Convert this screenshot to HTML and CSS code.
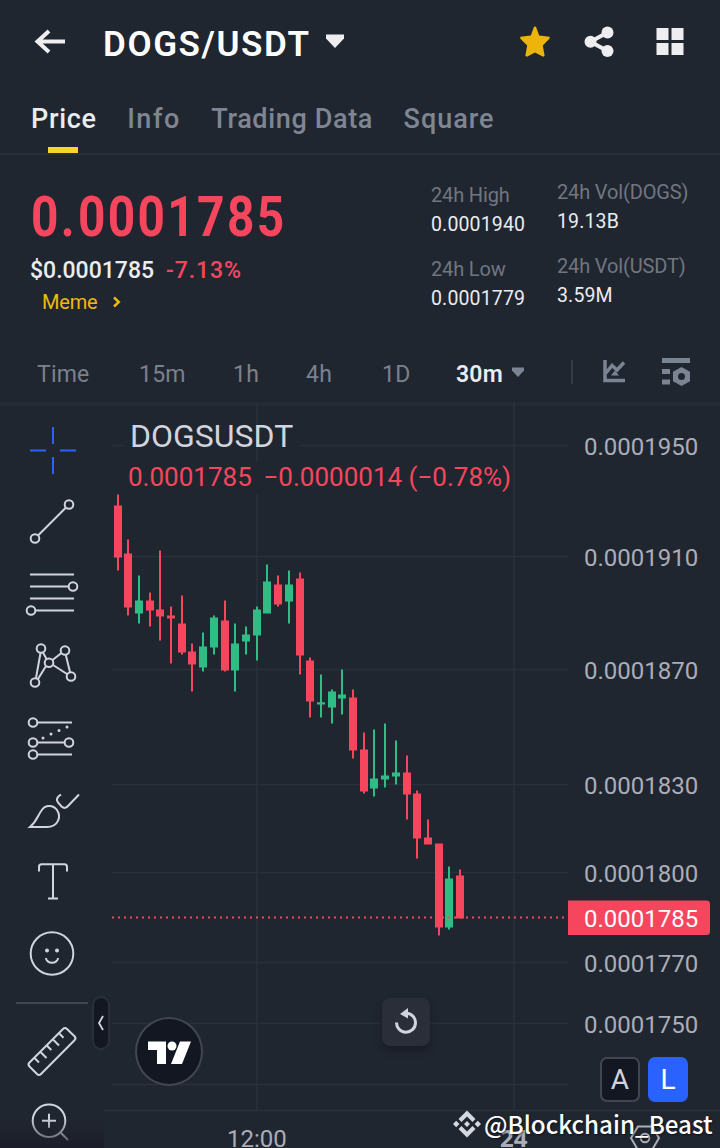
FILE: index.html
```
<!DOCTYPE html>
<html lang="en">
<head>
  <meta charset="UTF-8" />
  <title>DOGS/USDT</title>
  <link rel="stylesheet" href="styles.css">
</head>
<body>
  <header class="header">
    <svg class="back" width="36" height="36" viewBox="0 0 36 36"><path d="M33 17.500H6M17 7L5.500 17.500L17 28"/></svg>
    <h1>DOGS/USDT</h1>
    <svg class="caret" width="20" height="16" viewBox="0 0 20 16"><path d="M1 .500h18v4l-9 9.500L1 4.500z"/></svg>
    <div class="header-icons">
      <svg class="star" width="32" height="32" viewBox="0 0 32 32"><path d="M17 .8L20.200 9.600L30.500 10.800Q31 12 30.400 12.800L23.800 19.600L25.600 29.500Q24.800 31 23.600 30.500L16 26.500L8.400 30.500Q7 31 6.400 29.500L8.200 19.600L1.400 12.800Q.9 12 1.500 10.800L11.800 9.600L15 .8Q16 0 17 .8Z"/></svg>
      <svg class="share" width="32" height="32" viewBox="0 0 32 32"><path d="M24.500 6.500L7.500 15.700L24.500 25"/><circle cx="24.500" cy="6.500" r="6"/><circle cx="7.500" cy="15.700" r="6"/><circle cx="24.500" cy="25" r="6"/></svg>
      <svg class="apps" width="32" height="32" viewBox="0 0 32 32"><path d="M2.500 2h12v12h-12zM17.500 2h12v12h-12zM2.500 17h12v12h-12zM17.500 17h12v12h-12z"/></svg>
    </div>
  </header>

  <nav class="tabs">
    <a class="tab active">Price</a>
    <a class="tab">Info</a>
    <a class="tab">Trading Data</a>
    <a class="tab">Square</a>
  </nav>

  <section class="summary">
    <div class="price-box">
      <div class="price">0<span class="dot">.</span>0001785</div>
      <div class="sub"><span class="usd">$0.0001785</span><span class="change">-7.13%</span></div>
      <div class="tag">Meme <svg width="10" height="14" viewBox="0 0 10 14"><path d="M2 2.500L6.800 7L2 11.500"/></svg></div>
    </div>
    <div class="stats stats-price">
      <div class="stat"><div class="label">24h High</div><div class="value">0.0001940</div></div>
      <div class="stat"><div class="label">24h Low</div><div class="value">0.0001779</div></div>
    </div>
    <div class="stats">
      <div class="stat"><div class="label">24h Vol(DOGS)</div><div class="value">19.13B</div></div>
      <div class="stat"><div class="label">24h Vol(USDT)</div><div class="value">3.59M</div></div>
    </div>
  </section>

  <div class="intervals">
    <span>Time</span>
    <span>15m</span>
    <span>1h</span>
    <span>4h</span>
    <span>1D</span>
    <span class="selected">30m <svg width="14" height="11" viewBox="0 0 14 11"><path d="M1 .500h12v3L7 10L1 3.500z"/></svg></span>
    <i class="divider"></i>
    <svg class="indicator" width="26" height="26" viewBox="0 0 26 26"><path d="M4 2v20.500h20M5 15L11 7.500L16 12L23 4.500"/><path class="fill" d="M10 17.500l4-5l4 5z"/></svg>
    <svg class="settings" width="30" height="30" viewBox="0 0 30 30"><path d="M1 2h28v5H1zM1 13h8v5H1zM1 23.500h8v5H1z"/><path fill-rule="evenodd" d="M20.500 11L29 15.800v9.400L20.500 30L12 25.200v-9.400zM20.500 17a3.500 3.500 0 1 0 0 7a3.500 3.500 0 1 0 0-7z"/></svg>
  </div>

  <main class="chart">
    <div class="tools">
      <svg class="tool cross" viewBox="0 0 104 72"><path d="M53 13v17M53 43v17M30 36.500h16M60 36.500h16"/></svg>
      <svg class="tool" viewBox="0 0 104 72"><circle cx="69" cy="18.500" r="4.300"/><circle cx="35" cy="52.500" r="4.300"/><path d="M38 49.500L66 21.500"/></svg>
      <svg class="tool" viewBox="0 0 104 72"><path d="M30 16.500h44M30 28.500h38.500M30 40.500h44M35.500 52.500H74"/><circle cx="73" cy="28.500" r="4.300"/><circle cx="31" cy="52.500" r="4.300"/></svg>
      <svg class="tool" viewBox="0 0 104 72"><circle cx="41" cy="18.500" r="4.300"/><circle cx="65" cy="20.500" r="4.300"/><circle cx="49" cy="32.700" r="4.300"/><circle cx="71" cy="46.500" r="4.300"/><circle cx="35" cy="52.500" r="4.300"/><path d="M40.500 23L36 48M43 22.500L46.500 29M46 36L38 49M52.500 30L61.500 23M53 35L67 44M65.800 25L70 42"/></svg>
      <svg class="tool" viewBox="0 0 104 72"><circle cx="33" cy="20.500" r="4.300"/><circle cx="33" cy="40.500" r="4.300"/><circle cx="33" cy="52.500" r="4.300"/><circle cx="69" cy="40.500" r="4.300"/><path d="M37.500 20.500H72M37.500 40.500h27M37.500 52.500H72"/><path class="dots" d="M43 36h.01M51 32h.01M59 28.500h.01M67 25h.01"/></svg>
      <svg class="tool" viewBox="0 0 104 72"><path d="M30 53C37 47 38 41 41.500 36.500C45 30.500 53 30.500 57 36C61.500 43 58 53 47 53Z"/><path d="M61 20.500L59 22Q55.500 25 58 28.500L61.500 32.500Q65 35.500 68 32L79 20.500"/></svg>
      <svg class="tool" viewBox="0 0 104 72"><path d="M39 25.500V21Q39 18.300 41.500 18.300H64.500Q67 18.300 67 21V25.500M53 18.300V52.500M48 52.500h10"/></svg>
      <svg class="tool" viewBox="0 0 104 72"><circle cx="52" cy="35.500" r="21.300"/><path d="M46 40a6 4.800 0 0 0 12 0"/><path class="eyes" d="M47 32.500h.01M57 32.500h.01"/></svg>
      <hr>
      <svg class="tool" viewBox="0 0 104 72"><path d="M63 14Q65 12 67 14L74.500 21.300Q76.500 23.300 74.500 25.300L41 59Q39 61 37 59L29.500 51.500Q27.500 49.500 29.500 47.500ZM34.500 43l4.500 4.500M40.500 37l6 6M46.800 30.500l4.500 4.500M53 24.500l6 6M59 18.300l4.500 4.500"/></svg>
      <svg class="tool" viewBox="0 0 104 72"><circle cx="49" cy="33.700" r="16.300"/><path d="M42 33.700h14M49 26.700v14M61 46l7 7"/></svg>
      <div class="fade"></div>
    </div>

    <svg class="plot" width="616" height="746" viewBox="104 402 616 746">
      <path class="grid" d="M112 445.500H124M300 445.500H568M112 556.500H568M112 669.500H568M112 784.500H568M112 872.500H568M112 962.500H568M112 1023.500H568M112 1084.500H568M257 402V462M257 494V1110M514 402V1110M104 1110.500H720"/>
      <text class="symbol" x="130" y="446.500">DOGSUSDT</text>
      <text class="legend" x="128" y="486">0.0001785</text>
      <text class="legend" x="263.500" y="486">−0.0000014 (−0.78%)</text>
      <g id="candles"></g>
      <path class="last-line" d="M112 917.500H568"/>
      <path class="last-tag" d="M568 900.500H706.500Q710 900.500 710 904V931.500Q710 935 706.500 935H568Z"/>
      <g class="axis">
        <text x="584" y="454.500">0.0001950</text>
        <text x="584" y="565.500">0.0001910</text>
        <text x="584" y="678.500">0.0001870</text>
        <text x="584" y="793.500">0.0001830</text>
        <text x="584" y="881.500">0.0001800</text>
        <text class="last" x="584" y="926.500">0.0001785</text>
        <text x="584" y="971.500">0.0001770</text>
        <text x="584" y="1032.500">0.0001750</text>
        <text x="227" y="1146.500">12:00</text>
        <text class="day" x="500" y="1146.500">24</text>
      </g>
      <path class="gear" d="M638 1126.500H652L659 1138L652 1150H638L631 1138Z"/>
      <circle class="gear" cx="645" cy="1138" r="4.300"/>
    </svg>

    <button class="collapse"><svg width="10" height="18" viewBox="0 0 10 18"><path d="M7 2L3 9L7 16"/></svg></button>
    <div class="tv-logo"><svg width="44" height="24" viewBox="0 0 44 24"><path d="M1 .500h18V23h-9V9H1z"/><circle cx="25" cy="5" r="4.500"/><path d="M33 .500H44L35 23H24z"/></svg></div>
    <button class="reset"><svg width="28" height="28" viewBox="0 0 28 28"><path class="ring" d="M4.500 14.500a9.500 9.500 0 1 0 10-9.300"/><path d="M16 0v10.500L8 6z"/></svg></button>
    <div class="scale">
      <button class="auto">A</button>
      <button class="log">L</button>
    </div>
    <div class="author">
      <svg width="28" height="28" viewBox="0 0 28 28"><path d="M14 .500L22.500 9L19.500 12L14 6.500L8.500 12L5.500 9zM14 27.500L22.500 19L19.500 16L14 21.500L8.500 16L5.500 19zM14 11l3 3l-3 3l-3-3zM3.200 10.800l3.200 3.200l-3.200 3.200L0 14zM24.800 10.800l3.200 3.200l-3.200 3.200L21.600 14z"/></svg>
      <span>@Blockchain_Beast</span>
    </div>
  </main>

  <script>
    // x, high, body top, body bottom, low, up/down
    var candles = [
      [118, 494.5, 505.5, 557.5, 570.5, 'down'],
      [128, 539.5, 553.5, 607.5, 615.5, 'down'],
      [139, 575.5, 600.5, 613.5, 623.5, 'up'],
      [150, 592.5, 600.5, 610.5, 626.5, 'down'],
      [160, 550.5, 609.5, 616.5, 640.5, 'down'],
      [171, 606.5, 615.5, 618.5, 663.5, 'down'],
      [182, 595.5, 623.5, 652.5, 654.5, 'down'],
      [192, 643.5, 651.5, 664.5, 691.5, 'down'],
      [203, 632.5, 646.5, 667.5, 671.5, 'up'],
      [214, 615.5, 617.5, 647.5, 654.5, 'up'],
      [225, 600.5, 620.5, 670.5, 671.5, 'down'],
      [235, 623.5, 643.5, 670.5, 691.5, 'up'],
      [246, 626.5, 634.5, 641.5, 654.5, 'up'],
      [257, 606.5, 609.5, 635.5, 660.5, 'up'],
      [267, 564.5, 581.5, 613.5, 613.5, 'up'],
      [278, 575.5, 584.5, 604.5, 606.5, 'down'],
      [289, 570.5, 584.5, 601.5, 623.5, 'up'],
      [300, 572.5, 578.5, 655.5, 674.5, 'down'],
      [310, 657.5, 660.5, 701.5, 717.5, 'down'],
      [321, 674.5, 702.2, 704.5, 717.5, 'up'],
      [332, 689.5, 691.5, 707.5, 723.5, 'up'],
      [342, 669.5, 694.5, 698.5, 714.5, 'up'],
      [353, 689.5, 697.5, 750.5, 758.5, 'down'],
      [364, 732.5, 749.5, 791.5, 793.5, 'down'],
      [374, 729.5, 778.5, 788.5, 796.5, 'up'],
      [385, 723.5, 775.5, 779.5, 787.5, 'up'],
      [396, 740.5, 772.5, 776.5, 784.5, 'up'],
      [407, 755.5, 772.5, 794.5, 819.5, 'down'],
      [417, 790.5, 793.5, 838.5, 858.5, 'down'],
      [428, 819.5, 837.5, 844.5, 844.5, 'down'],
      [439, 843.5, 843.5, 927.5, 935.5, 'down'],
      [449, 866.5, 878.5, 927.5, 929.5, 'up'],
      [460, 869.5, 875.5, 918.5, 918.5, 'down']
    ];

    var html = '';
    for (var i = 0; i < candles.length; i++) {
      var c = candles[i];
      html += `<path class="${c[5]}" d="M${c[0] - 1} ${c[1]}h2V${c[4]}h-2zM${c[0] - 4} ${c[2]}h8V${c[3]}h-8z"/>`;
    }
    document.getElementById('candles').innerHTML = html;
  </script>
</body>
</html>
```
FILE: styles.css
```
* {
  box-sizing: border-box;
}
body {
  margin: 0;
  width: 720px;
  height: 1148px;
  overflow: hidden;
  background-color: #202630;
  color: #eaecef;
  font-family: Roboto, "Liberation Sans", sans-serif;
}
svg {
  display: block;
  flex-shrink: 0;
}
button {
  padding: 0;
  border: 0;
  font-family: inherit;
}

/* Header */
.header {
  display: flex;
  align-items: center;
  height: 84px;
  padding: 0 34px 0 32px;
}
.header h1 {
  margin: 5px 0 0 35px;
  font-size: 35px;
  font-weight: 600;
  letter-spacing: 1.6px;
  line-height: 44px;
  color: #fff;
}
.back {
  fill: none;
  stroke: #eeeef0;
  stroke-width: 4;
}
.caret {
  margin-left: 14px;
  fill: #eeeef0;
}
.header-icons {
  display: flex;
  gap: 32px;
  margin-left: auto;
}
.star {
  fill: #edb50c;
}
.share {
  fill: #eeeef0;
}
.share path {
  fill: none;
  stroke: #eeeef0;
  stroke-width: 4;
}
.apps {
  margin-left: 7px;
  fill: #eeeef0;
}

/* Tabs */
.tabs {
  display: flex;
  gap: 30.5px;
  height: 71px;
  padding: 5px 31px 0;
  border-bottom: 2px solid #2a2f3a;
}
.tab {
  position: relative;
  font-size: 27px;
  font-weight: 500;
  letter-spacing: 0.65px;
  line-height: 60px;
  color: #7f8693;
}
.tab:nth-child(2) {
  letter-spacing: 1.5px;
}
.tab:nth-child(4) {
  letter-spacing: 1px;
}
.tab.active {
  letter-spacing: 0.7px;
  color: #eaecef;
}
.tab.active::after {
  content: "";
  position: absolute;
  left: 17px;
  bottom: 0;
  width: 30px;
  height: 6px;
  background-color: #fcd22f;
}

/* Price and 24h stats */
.summary {
  display: flex;
  height: 190px;
  padding: 26px 0 0 31px;
}
.price-box {
  width: 400px;
  padding-top: 6px;
}
/* narrow bold digits with wide gaps */
.price {
  font-size: 55px;
  font-weight: 700;
  letter-spacing: 2.7px;
  line-height: 60px;
  color: #f6465d;
  transform: scaleX(0.87);
  transform-origin: left;
}
.price .dot {
  margin-right: 1px;
}
.sub {
  margin-top: 7px;
  font-size: 23px;
  font-weight: 500;
  line-height: 34px;
}
.usd {
  margin-left: -1px;
}
.change {
  margin-left: 12px;
  letter-spacing: 0.9px;
  color: #f6465d;
}
.tag {
  display: flex;
  align-items: center;
  gap: 15px;
  margin: -1px 0 0 11px;
  font-size: 20px;
  line-height: 30px;
  letter-spacing: -0.2px;
  color: #f0b90b;
}
.tag svg {
  fill: none;
  stroke: #f0b90b;
  stroke-width: 2.4;
}
.stats {
  display: flex;
  flex-direction: column;
  gap: 16px;
  margin-top: -3px;
}
.stats-price {
  width: 126px;
  margin-top: 0;
}
.label {
  font-size: 20px;
  letter-spacing: -0.15px;
  line-height: 28px;
  color: #707681;
}
.value {
  padding-top: 1px;
  font-size: 19.5px;
  letter-spacing: 0.15px;
  line-height: 29px;
}

/* Interval bar */
.intervals {
  display: grid;
  grid-template-columns: 102px 94px 73px 76px 74px 115px 30px 60px 30px;
  align-items: center;
  height: 57px;
  padding: 1px 0 0 37px;
  font-size: 23px;
  letter-spacing: 0.2px;
  color: #7b818d;
}
.selected {
  display: flex;
  align-items: center;
  gap: 8px;
  font-weight: 600;
  color: #eaecef;
}
.selected svg {
  margin-top: -4px;
  fill: #7b8492;
}
.divider {
  width: 2px;
  height: 24px;
  margin-top: -5px;
  background-color: #363b46;
}
.indicator {
  margin-top: -6px;
  fill: none;
  stroke: #7b8492;
  stroke-width: 3.5;
}
.indicator .fill {
  fill: #7b8492;
  stroke: none;
}
.settings {
  margin-top: -7px;
  fill: #7b8492;
}

/* Chart */
.chart {
  position: relative;
  display: flex;
  height: 746px;
  box-shadow: inset 0 4px #252a35;
}
.tools {
  position: relative;
  width: 104px;
  height: 746px;
  padding-top: 12px;
  overflow: hidden;
}
.tool {
  width: 104px;
  height: 72px;
  fill: none;
  stroke: #d1d4dc;
  stroke-width: 2;
}
.tool.cross {
  stroke: #2962ff;
}
.tool .dots {
  stroke-width: 3;
  stroke-linecap: round;
}
.tool .eyes {
  stroke-width: 4;
  stroke-linecap: round;
}
.tools hr {
  width: 72px;
  height: 2px;
  margin: 12px 16px 11px;
  border: 0;
  background-color: #434651;
}
.fade {
  position: absolute;
  left: 0;
  bottom: 0;
  width: 104px;
  height: 30px;
  background: linear-gradient(rgba(26, 28, 40, 0), rgba(26, 28, 40, 0.8));
}
.grid {
  fill: none;
  stroke: #2b303b;
  stroke-width: 1.6;
}
.symbol {
  font-size: 32px;
  fill: #d1d4dc;
}
.legend {
  font-size: 26px;
  fill: #f6465d;
}
.axis {
  font-size: 24px;
  fill: #abadb8;
}
.axis .last {
  fill: #fff;
}
.axis .day {
  font-family: "Open Sans", sans-serif;
  font-weight: 700;
}
.up {
  fill: #2ebd85;
}
.down {
  fill: #f6465d;
}
.last-line {
  fill: none;
  stroke: #f6465d;
  stroke-width: 2;
  stroke-dasharray: 2 4;
}
.last-tag {
  fill: #f6465d;
}
.gear {
  fill: none;
  stroke: #abadb8;
  stroke-width: 2;
}

/* Controls over the chart */
.collapse {
  position: absolute;
  left: 92px;
  top: 594px;
  display: flex;
  align-items: center;
  justify-content: center;
  width: 18px;
  height: 54px;
  border: 2px solid #2a2e39;
  border-radius: 9px;
  background-color: #131722;
}
.collapse svg {
  fill: none;
  stroke: #d1d4dc;
  stroke-width: 1.8;
}
.tv-logo {
  position: absolute;
  left: 135px;
  top: 615px;
  display: flex;
  align-items: center;
  justify-content: center;
  width: 68px;
  height: 69px;
  padding-top: 2px;
  border: 2px solid #434651;
  border-radius: 50%;
  background-color: #131722;
}
.tv-logo svg {
  fill: #fff;
}
.reset {
  position: absolute;
  left: 382px;
  top: 596px;
  display: flex;
  align-items: center;
  justify-content: center;
  width: 48px;
  height: 48px;
  border-radius: 8px;
  background-color: #2a2e39;
  box-shadow: 0 4px 8px rgba(0, 0, 0, 0.3);
}
.reset svg {
  fill: #d1d4dc;
}
.reset .ring {
  fill: none;
  stroke: #d1d4dc;
  stroke-width: 3;
}
.scale {
  position: absolute;
  left: 600px;
  top: 655px;
  display: flex;
  gap: 8px;
}
.scale button {
  width: 40px;
  height: 45px;
  border-radius: 7px;
  font-size: 28px;
  line-height: 40px;
}
.auto {
  border: 2px solid #434651;
  background-color: #131722;
  color: #d1d4dc;
}
.log {
  background-color: #2962ff;
  color: #fff;
}
.author {
  position: absolute;
  left: 453px;
  top: 704px;
  display: flex;
  align-items: center;
  gap: 3px;
  font-family: "Noto Sans CJK SC", sans-serif;
  font-size: 24.2px;
  font-weight: 500;
  line-height: 36px;
  color: #fff;
  text-shadow: 1px 1px 2px rgba(0, 0, 0, 0.6);
}
.author svg {
  fill: #d5d8df;
}
```
